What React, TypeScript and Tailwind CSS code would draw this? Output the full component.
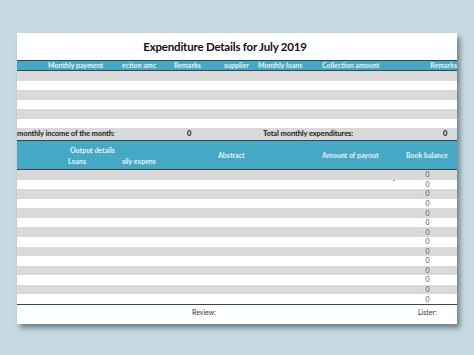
const font = { fontFamily: "Lato, 'Open Sans', sans-serif" };

function StripeRows({ count, height, zeros }: { count: number; height: string; zeros?: boolean }) {
  return (
    <>
      {Array.from({ length: count }).map((_, i) => (
        <div
          key={i}
          className={`flex items-center ${height} ${i % 2 === 0 ? "bg-[#d9d9d9]" : "bg-white"}`}
        >
          {zeros && (
            <>
              <span className="w-[376px]" />
              {i === 1 ? (
                <span className="self-start w-[1.5px] h-[1.5px] bg-[#8a9aa5]" />
              ) : (
                <span className="w-[1.5px]" />
              )}
              <span className="ml-[31px] text-[7px] leading-none text-[#555]">0</span>
            </>
          )}
        </div>
      ))}
    </>
  );
}

export default function App() {
  return (
    <div className="w-[474px] h-[355px] bg-[#c5dbe1] pt-[33px] pl-[17px]" style={font}>
      <div className="w-[440px] bg-white shadow-[3px_4px_5px_rgba(40,55,65,0.55)]">
        {/* Title */}
        <div className="h-[27px] flex items-center justify-center pr-[24px] text-[11.5px] tracking-[-0.2px] font-bold text-[#111]">
          Expenditure Details for July 2019
        </div>

        {/* Upper header */}
        <div className="h-[11px] flex items-center bg-[#45a8c4] border-y border-[#2e4a57] text-[7px] font-bold text-[#e6f3f7] whitespace-nowrap leading-none">
          <span className="w-[31px]" />
          <span className="w-[74px]">Monthly payment</span>
          <span className="w-[52px]">ection amc</span>
          <span className="w-[50px]">Remarks</span>
          <span className="w-[34px]">supplier</span>
          <span className="w-[64px]">Monthly loans</span>
          <span className="flex-1">Collection amount</span>
          <span>Remarks</span>
        </div>

        <StripeRows count={6} height="h-[9.5px]" />

        {/* Summary */}
        <div className="h-[12px] flex items-center bg-[#d9d9d9] text-[7.5px] font-bold text-[#1a1a1a] whitespace-nowrap leading-none tracking-[-0.1px]">
          <span className="w-[170px]">monthly income of the month:</span>
          <span className="w-[76px]">0</span>
          <span className="w-[180px]">Total monthly expenditures:</span>
          <span>0</span>
        </div>

        {/* Lower header */}
        <div className="h-[30px] flex items-center bg-[#45a8c4] border-y border-[#2e4a57] text-[7px] font-bold text-[#e6f3f7] whitespace-nowrap leading-none">
          <div className="w-[201px] h-full flex flex-col justify-between pt-[6px] pb-[4px]">
            <span className="pl-[53px]">Output details</span>
            <div className="flex">
              <span className="pl-[51px] w-[105px]">Loans</span>
              <span>sily expens</span>
            </div>
          </div>
          <span className="w-[104px]">Abstract</span>
          <span className="w-[84px]">Amount of payout</span>
          <span>Book balance</span>
        </div>

        <StripeRows count={14} height="h-[9.57px]" zeros />

        {/* Footer */}
        <div className="h-[20px] flex items-center border-t border-[#2e4a57] text-[7px] text-[#333] leading-none pb-[3px]">
          <span className="w-[175px]" />
          <span className="w-[226px]">Review:</span>
          <span>Lister:</span>
        </div>
      </div>
    </div>
  );
}
